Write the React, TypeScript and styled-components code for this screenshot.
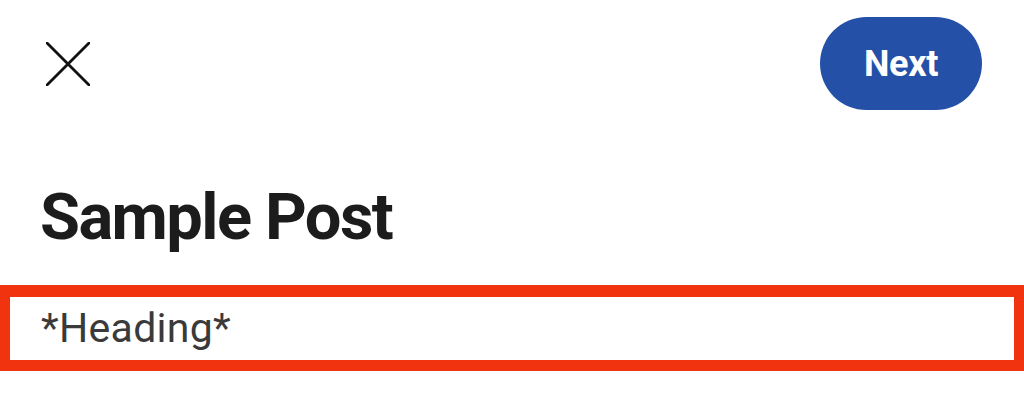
import React from 'react';
import styled, {createGlobalStyle} from 'styled-components';

const GlobalStyle=createGlobalStyle`
body{
  margin:0;
  background:#ffffff;
  font-family:Roboto, "Noto Sans", sans-serif;
}
`;

const Page=styled.div`
width:1024px;
height:412px;
background:#ffffff;
overflow:hidden;
`;

const TopBar=styled.div`
display:flex;
justify-content:space-between;
align-items:center;
height:93px;
padding:17px 42px 0 46px;
`;

const CloseButton=styled.button`
display:flex;
align-items:center;
justify-content:center;
width:44px;
height:44px;
padding:0;
border:none;
background:none;
color:#111111;
`;

const NextButton=styled.button`
width:162px;
height:93px;
border:none;
border-radius:47px;
background:#2451a7;
color:#ffffff;
font-family:Roboto, sans-serif;
font-weight:700;
font-size:36px;
letter-spacing:-0.3px;
`;

const Title=styled.h1`
margin:74px 0 0 0;
padding-left:40px;
font-size:65px;
line-height:66px;
font-weight:700;
color:#1c1c1c;
letter-spacing:-1.6px;
`;

const HighlightBox=styled.div`
margin-top:35px;
border-style:solid;
border-color:#f2330f;
border-width:12px 10px 11px 10px;
height:63px;
display:flex;
align-items:center;
padding-left:31px;
`;

const FieldText=styled.span`
font-size:41px;
line-height:63px;
color:#3a3a3a;
letter-spacing:0.3px;
`;

const App=()=>{
  return (
    <Page>
      <GlobalStyle/>
      <TopBar>
        <CloseButton aria-label="close">
          <svg width="44" height="44" viewBox="0 0 44 44">
            <path d="M1 1 L43 43 M43 1 L1 43" stroke="currentColor" strokeWidth="2.8" strokeLinecap="round"/>
          </svg>
        </CloseButton>
        <NextButton>Next</NextButton>
      </TopBar>
      <Title>Sample Post</Title>
      <HighlightBox>
        <FieldText>*Heading*</FieldText>
      </HighlightBox>
    </Page>
  )
}

export default App
